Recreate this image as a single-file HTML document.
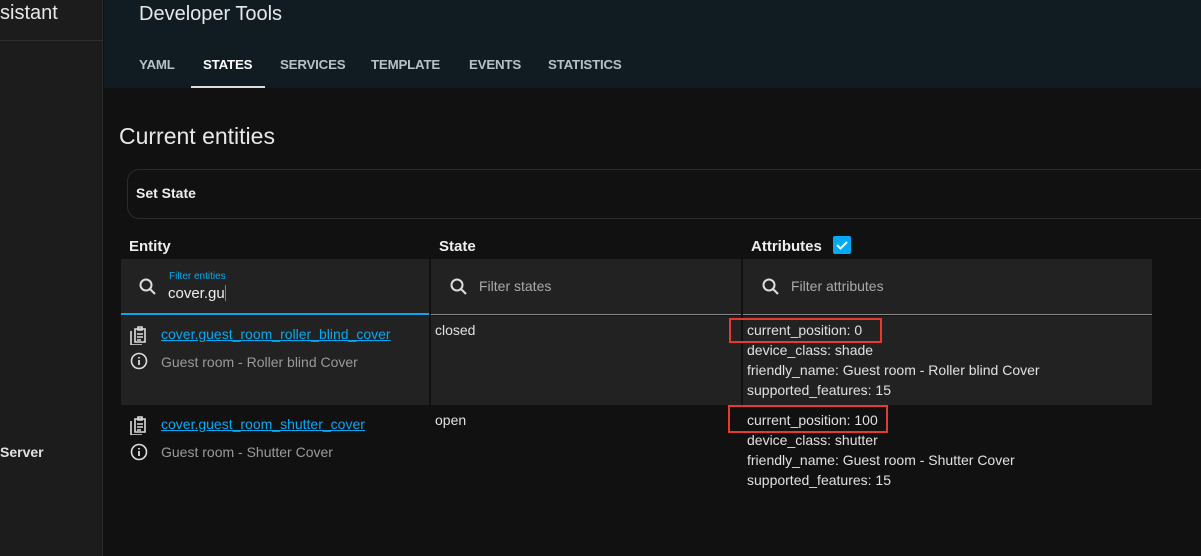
<!DOCTYPE html>
<html><head><style>
*{margin:0;padding:0;box-sizing:border-box}
body{width:1201px;height:556px;background:#111;font-family:"Liberation Sans",sans-serif;color:#e1e1e1;position:relative;overflow:hidden}
.a{position:absolute}
.sb{left:0;top:0;width:103px;height:556px;background:#1c1c1c;border-right:1px solid #2a2a2a}
.hd{left:104px;top:0;width:1097px;height:88px;background:#111c22}
.tab{top:57px;font-size:13.3px;font-weight:bold;color:#b8c0c4;letter-spacing:-0.2px}
.f{font-size:14px}
.rb{border:2px solid #e53935}
</style></head><body>
<div class="a sb"></div>
<div class="a" style="left:0;top:40px;width:103px;height:1px;background:#2e2e2e"></div>
<div class="a" style="left:0;top:2px;font-size:20px;color:#e8e8e8">sistant</div>
<div class="a f" style="left:0;top:444px;font-weight:bold;font-size:14px">Server</div>
<div class="a hd"></div>
<div class="a" style="left:139px;top:3px;font-size:20px;color:#e8e8e8">Developer Tools</div>
<div class="a tab" style="left:139px">YAML</div>
<div class="a tab" style="left:203px;color:#fff">STATES</div>
<div class="a" style="left:191px;top:86px;width:74px;height:2px;background:#ddd"></div>
<div class="a tab" style="left:280px">SERVICES</div>
<div class="a tab" style="left:371px">TEMPLATE</div>
<div class="a tab" style="left:469px">EVENTS</div>
<div class="a tab" style="left:548px">STATISTICS</div>
<div class="a" style="left:119px;top:123px;font-size:23px;color:#e8e8e8">Current entities</div>
<div class="a" style="left:127px;top:169px;width:1090px;height:50px;border:1px solid #2c2c2c;border-radius:12px"></div>
<div class="a f" style="left:136px;top:185px;font-weight:bold;color:#eee">Set State</div>
<div class="a" style="left:129px;top:238px;font-size:15px;font-weight:bold;color:#eee">Entity</div>
<div class="a" style="left:439px;top:238px;font-size:15px;font-weight:bold;color:#eee">State</div>
<div class="a" style="left:751px;top:238px;font-size:15px;font-weight:bold;color:#eee">Attributes</div>
<div class="a" style="left:833px;top:236px;width:18px;height:18px;background:#03a9f4;border-radius:2px"><svg width="18" height="18"><path d="M4 9l3.5 3.5L14 6" stroke="#fff" stroke-width="2" fill="none"/></svg></div>
<div class="a" style="left:121px;top:259px;width:308px;height:56px;background:#222;border-bottom:2px solid #03a9f4"></div>
<div class="a" style="left:431px;top:259px;width:310px;height:56px;background:#222;border-bottom:1px solid #888"></div>
<div class="a" style="left:743px;top:259px;width:409px;height:56px;background:#222;border-bottom:1px solid #888"></div>
<svg class="a" style="left:138px;top:277px" width="20" height="20"><circle cx="8" cy="8" r="5.5" stroke="#ddd" stroke-width="2" fill="none"/><path d="M12 12l5 5" stroke="#ddd" stroke-width="2"/></svg>
<svg class="a" style="left:449px;top:277px" width="20" height="20"><circle cx="8" cy="8" r="5.5" stroke="#ddd" stroke-width="2" fill="none"/><path d="M12 12l5 5" stroke="#ddd" stroke-width="2"/></svg>
<svg class="a" style="left:761px;top:277px" width="20" height="20"><circle cx="8" cy="8" r="5.5" stroke="#ddd" stroke-width="2" fill="none"/><path d="M12 12l5 5" stroke="#ddd" stroke-width="2"/></svg>
<div class="a" style="left:169px;top:271px;font-size:10px;color:#03a9f4">Filter entities</div>
<div class="a" style="left:168px;top:285px;font-size:15px;color:#eee">cover.gu<span style="display:inline-block;width:1px;height:16px;background:#03a9f4;vertical-align:-3px"></span></div>
<div class="a" style="left:479px;top:278px;font-size:14px;color:#aaa">Filter states</div>
<div class="a" style="left:791px;top:278px;font-size:14px;color:#aaa">Filter attributes</div>
<div class="a" style="left:121px;top:316px;width:1031px;height:89px;background:#222"></div>
<div class="a" style="left:429px;top:316px;width:2px;height:89px;background:#111"></div>
<div class="a" style="left:741px;top:316px;width:2px;height:89px;background:#111"></div>
<svg class="a" style="left:130px;top:325px" width="18" height="20"><path d="M5 4h10v13H5z M8 2h4v3H8z M1 6v14h11" stroke="#ddd" stroke-width="1.6" fill="none"/><path d="M7 9h6M7 12h6M7 15h4" stroke="#ddd" stroke-width="1.4"/></svg>
<svg class="a" style="left:130px;top:352px" width="18" height="18"><circle cx="9" cy="9" r="7.5" stroke="#ddd" stroke-width="1.6" fill="none"/><path d="M9 8v5M9 5v1.5" stroke="#ddd" stroke-width="1.8"/></svg>
<svg class="a" style="left:130px;top:415px" width="18" height="20"><path d="M5 4h10v13H5z M8 2h4v3H8z M1 6v14h11" stroke="#ddd" stroke-width="1.6" fill="none"/><path d="M7 9h6M7 12h6M7 15h4" stroke="#ddd" stroke-width="1.4"/></svg>
<svg class="a" style="left:130px;top:443px" width="18" height="18"><circle cx="9" cy="9" r="7.5" stroke="#ddd" stroke-width="1.6" fill="none"/><path d="M9 8v5M9 5v1.5" stroke="#ddd" stroke-width="1.8"/></svg>
<div class="a f" style="left:161px;top:326px;color:#03a9f4;text-decoration:underline">cover.guest_room_roller_blind_cover</div>
<div class="a f" style="left:161px;top:354px;color:#9a9a9a">Guest room - Roller blind Cover</div>
<div class="a f" style="left:161px;top:416px;color:#03a9f4;text-decoration:underline">cover.guest_room_shutter_cover</div>
<div class="a f" style="left:161px;top:444px;color:#9a9a9a">Guest room - Shutter Cover</div>
<div class="a f" style="left:435px;top:322px">closed</div>
<div class="a f" style="left:435px;top:412px">open</div>
<div class="a f" style="left:747px;top:320px;line-height:20px">current_position: 0<br>device_class: shade<br>friendly_name: Guest room - Roller blind Cover<br>supported_features: 15</div>
<div class="a f" style="left:747px;top:410px;line-height:20px">current_position: 100<br>device_class: shutter<br>friendly_name: Guest room - Shutter Cover<br>supported_features: 15</div>
<div class="a rb" style="left:729px;top:318px;width:153px;height:25px"></div>
<div class="a rb" style="left:728px;top:405px;width:160px;height:28px"></div>
</body></html>
